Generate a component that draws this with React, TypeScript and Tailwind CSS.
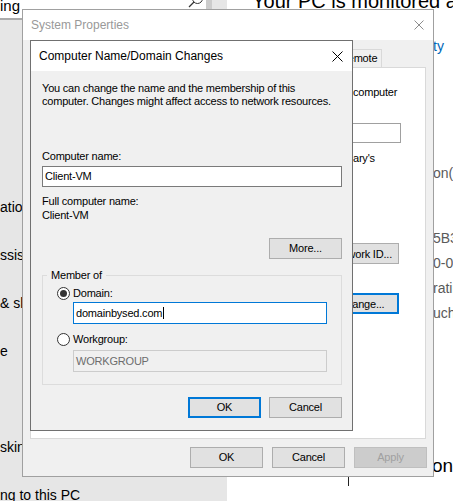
import React from "react";

function CloseIcon({ color, size }: { color: string; size: number }) {
  const s = size;
  return (
    <svg width={s} height={s} viewBox={`0 0 ${s} ${s}`} fill="none" className="shrink-0">
      <path d={`M0.5 0.5 L${s - 0.5} ${s - 0.5} M${s - 0.5} 0.5 L0.5 ${s - 0.5}`} stroke={color} strokeWidth="1" />
    </svg>
  );
}

type BtnVariant = "normal" | "default" | "disabled";

function Btn({ children, variant = "normal", wide = false }: { children: React.ReactNode; variant?: BtnVariant; wide?: boolean }) {
  const look =
    variant === "default"
      ? "border-2 border-[#0078d7] bg-[#e1e1e1] text-black"
      : variant === "disabled"
      ? "border border-[#bfbfbf] bg-[#cccccc] text-[#a0a0a0]"
      : "border border-[#adadad] bg-[#e1e1e1] text-black";
  return (
    <div
      className={`flex h-[21px] shrink-0 items-center justify-center whitespace-nowrap text-[11px] tracking-[-0.2px] ${
        wide ? "w-[75px]" : "w-[73px]"
      } ${look}`}
    >
      {children}
    </div>
  );
}

function Radio({ checked }: { checked: boolean }) {
  return (
    <div className="flex h-[13px] w-[13px] shrink-0 items-center justify-center rounded-full border border-[#333333] bg-white">
      {checked && <div className="h-[7px] w-[7px] rounded-full bg-[#333333]" />}
    </div>
  );
}

export default function App() {
  const navItems = ["ations & actions", "ssist", "& sleep", "e", "", "sking", "ng to this PC"];
  return (
    <div className="relative flex h-[501px] w-[453px] overflow-hidden bg-white font-['Liberation_Sans',Arial,sans-serif] text-black">
      {/* Settings left navigation (background) */}
      <div className="flex w-[227px] shrink-0 flex-col bg-[#e6e6e6]">
        <div className="flex h-[20px] shrink-0">
          <div className="flex w-[206px] items-start justify-between overflow-hidden border-b-2 border-[#ababab] bg-white">
            <span className="-mt-[4px] whitespace-nowrap text-[15px] leading-[20px]">ing</span>
            <svg width="16" height="16" viewBox="0 0 16 16" fill="none" className="-mt-[8px] mr-[2px] shrink-0">
              <circle cx="9.5" cy="6.5" r="5" stroke="#333333" strokeWidth="1" />
              <path d="M6 10 L1 15" stroke="#333333" strokeWidth="1.2" />
            </svg>
          </div>
          <div className="h-[20px] w-[6px] bg-[#cccccc]" />
        </div>
        <div className="mt-[163px] flex flex-col">
          {navItems.map((t, i) => (
            <div key={i} className="flex h-[48px] items-center overflow-hidden whitespace-nowrap text-[14px]">
              {t}
            </div>
          ))}
        </div>
      </div>

      {/* Settings right content (background) */}
      <div className="flex min-w-0 flex-1 flex-col overflow-hidden bg-white">
        <div className="-mt-[9px] ml-[25px] h-[20px] whitespace-nowrap text-[20px] leading-[20px]">
          Your PC is monitored and protected.
        </div>
        <div className="ml-[206px] mt-[25px] h-[20px] whitespace-nowrap text-[14px] leading-[20px] text-[#0067b8]">ty</div>
        <div className="ml-[206px] mt-[107px] h-[20px] whitespace-nowrap text-[14px] leading-[20px] text-[#5a5a5a]">on(R)</div>
        <div className="ml-[206px] mt-[43px] h-[25px] whitespace-nowrap text-[14px] leading-[25px] text-[#5a5a5a]">5B3</div>
        <div className="ml-[206px] h-[25px] whitespace-nowrap text-[14px] leading-[25px] text-[#5a5a5a]">0-0</div>
        <div className="ml-[206px] h-[25px] whitespace-nowrap text-[14px] leading-[25px] text-[#5a5a5a]">rating</div>
        <div className="ml-[206px] h-[25px] whitespace-nowrap text-[14px] leading-[25px] text-[#5a5a5a]">uch</div>
        <div className="ml-[205px] mt-[128px] h-[24px] whitespace-nowrap text-[19px] leading-[24px]">ons</div>
        <div className="ml-[121px] -mt-[1px] h-[9px] w-px bg-[#222222]" />
      </div>

      {/* System Properties window */}
      <div className="absolute left-[22px] top-[9px] flex h-[468px] w-[412px] flex-col border border-[#a0a0a0] bg-[#f0f0f0]">
        <div className="flex h-[30px] shrink-0 items-center justify-between bg-white pl-[8px] pr-[9px]">
          <span className="text-[12px] leading-[14px] text-[#999999]">System Properties</span>
          <CloseIcon color="#8c8c8c" size={10} />
        </div>
        <div className="ml-[310px] mt-[9px] flex h-[18px] w-[49px] items-center border border-b-0 border-[#d9d9d9] pl-[6px] text-[11px] tracking-[-0.2px]">
          Remote
        </div>
        <div className="ml-[7px] flex h-[372px] w-[396px] flex-col border border-[#d9d9d9] bg-white text-[11px] leading-[14px] tracking-[-0.2px]">
          <div className="ml-[322px] mt-[17px] whitespace-nowrap">computer</div>
          <div className="ml-[260px] mt-[24px] h-[20px] w-[110px] border border-[#a0a0a0] bg-white" />
          <div className="ml-[313px] mt-[8px] whitespace-nowrap">Mary&apos;s</div>
          <div className="ml-[293px] mt-[78px]">
            <Btn wide>Network ID...</Btn>
          </div>
          <div className="ml-[293px] mt-[29px]">
            <Btn wide variant="default">
              Change...
            </Btn>
          </div>
        </div>
        <div className="mt-[8px] flex justify-end gap-[9px] pr-[6px]">
          <Btn>OK</Btn>
          <Btn>Cancel</Btn>
          <Btn variant="disabled">Apply</Btn>
        </div>
      </div>

      {/* Computer Name/Domain Changes dialog */}
      <div className="absolute left-[30px] top-[40px] flex h-[391px] w-[323px] flex-col border border-[#707070] bg-[#f0f0f0]">
        <div className="flex h-[30px] shrink-0 items-center justify-between bg-white pl-[8px] pr-[9px]">
          <span className="whitespace-nowrap text-[12px] leading-[14px]">Computer Name/Domain Changes</span>
          <CloseIcon color="#000000" size={11} />
        </div>
        <div className="flex flex-col pl-[11px] pr-[10px] text-[11px] leading-[13px] tracking-[-0.2px]">
          <p className="mt-[11px] whitespace-nowrap">
            You can change the name and the membership of this
            <br />
            computer. Changes might affect access to network resources.
          </p>
          <div className="mt-[42px]">Computer name:</div>
          <div className="mt-[3px] flex h-[21px] items-center border border-[#7a7a7a] bg-white pl-[2px]">Client-VM</div>
          <div className="mt-[8px]">Full computer name:</div>
          <div className="mt-[1px]">Client-VM</div>
          <div className="mt-[16px] flex justify-end">
            <Btn>More...</Btn>
          </div>
          <fieldset className="mt-[10px] border border-[#dcdcdc] px-0 pb-[12px]">
            <legend className="ml-[4px] px-[4px]">Member of</legend>
            <div className="flex flex-col pl-[14px]">
              <div className="mt-[5px] flex h-[13px] items-center gap-[3px]">
                <Radio checked />
                <span>Domain:</span>
              </div>
              <div className="ml-[16px] mt-[2px] flex h-[22px] w-[254px] items-center border border-[#0078d7] bg-white pl-[2px]">
                <span>domainbysed.com</span>
                <span className="ml-[1px] h-[12px] w-px bg-black" />
              </div>
              <div className="mt-[9px] flex h-[13px] items-center gap-[3px]">
                <Radio checked={false} />
                <span>Workgroup:</span>
              </div>
              <div className="ml-[16px] mt-[4px] flex h-[22px] w-[254px] items-center border border-[#cccccc] bg-[#f0f0f0] pl-[2px] text-[#6d6d6d]">
                WORKGROUP
              </div>
            </div>
          </fieldset>
          <div className="mt-[12px] flex justify-end gap-[8px]">
            <Btn variant="default">OK</Btn>
            <Btn>Cancel</Btn>
          </div>
        </div>
      </div>
    </div>
  );
}
